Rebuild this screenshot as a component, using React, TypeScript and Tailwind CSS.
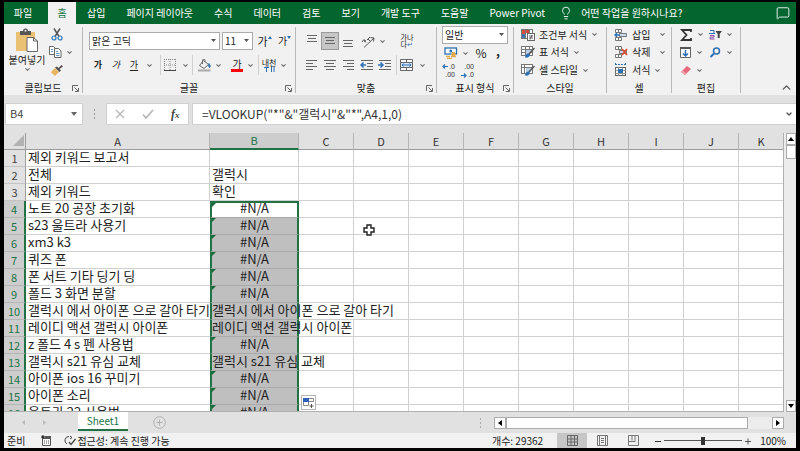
import type { ReactNode } from "react";
import { ChevronDown, ChevronUp, Lightbulb, MessageSquare } from "lucide-react";

const TABS = ["삽입", "페이지 레이아웃", "수식", "데이터", "검토", "보기", "개발 도구", "도움말", "Power Pivot"];
const COLUMNS = ["A", "B", "C", "D", "E", "F", "G", "H", "I", "J", "K"];

// "#N/A" marks the lookups that failed, spill marks text running over column C
const ROWS = [
    { a: "제외 키워드 보고서", b: "" },
    { a: "전체", b: "갤럭시" },
    { a: "제외 키워드", b: "확인" },
    { a: "노트 20 공장 초기화", b: "#N/A" },
    { a: "s23 울트라 사용기", b: "#N/A" },
    { a: "xm3 k3", b: "#N/A" },
    { a: "퀴즈 폰", b: "#N/A" },
    { a: "폰 서트 기타 딩기 딩", b: "#N/A" },
    { a: "폴드 3 화면 분할", b: "#N/A" },
    { a: "갤럭시 에서 아이폰 으로 갈아 타기", b: "갤럭시 에서 아이폰 으로 갈아 타기", spill: true },
    { a: "레이디 액션 갤럭시 아이폰", b: "레이디 액션 갤럭시 아이폰" },
    { a: "z 폴드 4 s 펜 사용법", b: "#N/A" },
    { a: "갤럭시 s21 유심 교체", b: "갤럭시 s21 유심 교체" },
    { a: "아이폰 ios 16 꾸미기", b: "#N/A" },
    { a: "아이폰 소리", b: "#N/A" },
    { a: "울트라 22 사용법", b: "#N/A" },
];

function Caret() {
    return <ChevronDown size={7} strokeWidth={4} className="shrink-0 text-[#777]" />;
}

function Divider() {
    return <span className="h-5 w-px bg-[#d0d0d0]" />;
}

function Tool({ label, className = "", children }: { label: string; className?: string; children: ReactNode }) {
    return (
        <button aria-label={label} className={`flex h-[18px] shrink-0 items-center justify-center ${className}`}>
            {children}
        </button>
    );
}

function Group({ title, width, launcher, children }: { title: string; width: string; launcher?: boolean; children: ReactNode }) {
    return (
        <section className={`flex shrink-0 ${width}`}>
            <div className="relative flex min-w-0 flex-1 flex-col">
                <div className="h-[53px] shrink-0">{children}</div>
                <h2 className="text-center leading-[17px]">{title}</h2>
                {launcher && (
                    <button aria-label={`${title} 설정`} className="absolute right-[3px] bottom-[3px]">
                        <svg width="7" height="7" viewBox="0 0 7 7" fill="none" stroke="#666">
                            <path d="M.5 6V.5H6M2.5 2.5l3.5 3.5M6.5 3v3.5H3" />
                        </svg>
                    </button>
                )}
            </div>
            <span className="mt-px mb-0.5 w-px bg-[#b9b9b9]" />
        </section>
    );
}

function Select({ label, value, className }: { label: string; value: string; className: string }) {
    return (
        <span className={`relative flex h-[18px] shrink-0 ${className}`}>
            <select aria-label={label} className="w-full appearance-none border border-[#ababab] bg-white pl-0.5 text-[10px] leading-4 text-[#222] outline-none">
                <option>{value}</option>
            </select>
            <svg width="5" height="3" viewBox="0 0 5 3" className="pointer-events-none absolute top-[7px] right-[4px]">
                <path d="M0 0h5L2.5 3z" fill="#555" />
            </svg>
        </span>
    );
}

// Horizontal strokes used by the alignment buttons: [x, y, width]
function Lines({ rows }: { rows: number[][] }) {
    return (
        <svg width="12" height="12" viewBox="0 0 12 12" fill="#666">
            {rows.map(([x, y, w]) => <rect key={y} x={x} y={y} width={w} height="1" />)}
        </svg>
    );
}

function Indent({ left }: { left?: boolean }) {
    return (
        <svg width="13" height="12" viewBox="0 0 13 12" fill="none" stroke="#666">
            <path d="M1 1.5h12M7 4.5h6M7 7.5h6M1 10.5h12" />
            <path d={left ? "M6 6H1M3.5 3.5L1 6l2.5 2.5" : "M0 6h5M2.5 3.5L5 6 2.5 8.5"} stroke="#2b6fb5" strokeWidth="1.5" />
        </svg>
    );
}

function PasteIcon() {
    return (
        <svg width="24" height="25" viewBox="0 0 24 25">
            <path d="M1 4h19v19H1z" fill="#eac073" />
            <path d="M5 3h3a2.5 2.5 0 0 1 5 0h3v4H5z" fill="#555" />
            <circle cx="10.5" cy="2.8" r="1" fill="#eee" />
            <path d="M12 9.5h6.5L22.5 13v10.5H12z" fill="#fff" stroke="#666" />
            <path d="M18.5 9.5V13h4" fill="none" stroke="#666" />
        </svg>
    );
}

function CutIcon() {
    return (
        <svg width="12" height="13" viewBox="0 0 12 13" fill="none">
            <path d="M3 .5l5 8M9 .5l-5 8" stroke="#555" strokeWidth="1.5" />
            <circle cx="3" cy="10" r="2" stroke="#3478b8" strokeWidth="1.2" />
            <circle cx="9" cy="10" r="2" stroke="#3478b8" strokeWidth="1.2" />
        </svg>
    );
}

function CopyIcon() {
    return (
        <svg width="13" height="12" viewBox="0 0 13 12" fill="#fff" stroke="#666">
            <path d="M.5.5h4l2 2v6h-6z" />
            <path d="M5.5 2.5h4L12 5v6.5H5.5z" />
            <path d="M2 3.5h2M2 5.5h2M7 5.5h2M7 7.5h3.5M7 9.5h3.5" stroke="#3c7cb8" strokeWidth=".8" />
        </svg>
    );
}

function BrushIcon() {
    return (
        <svg width="12" height="11" viewBox="0 0 12 11">
            <path d="M0 7l4-4 4 4-4 4c-1-1.5-2-1-4-4z" fill="#e8b562" />
            <path d="M4 2.5L8.5 7 10 5.5 8.5 4 12 1.5 10.5 0l-3 3L6 1.5z" fill="#505050" />
        </svg>
    );
}

function BucketIcon() {
    return (
        <svg width="13" height="13" viewBox="0 0 13 13" fill="none">
            <path d="M5.5 1.5l5 4L6 9.5l-4.500-3zM4.5 5V1.500a1.200 1.200 0 0 1 2.500 0V3" stroke="#666" />
            <path d="M11 4.5c1.500 2 1.500 3.500.5 4-1-.5-1-2-.5-4z" fill="#3478b8" stroke="#3478b8" />
            <rect y="10.5" width="12.5" height="2" fill="#aaa" />
        </svg>
    );
}

function MoneyIcon() {
    return (
        <svg width="14" height="12" viewBox="0 0 14 12">
            <rect x="1" y="1" width="11.5" height="6" fill="#fff" stroke="#2c70b0" strokeWidth="1.3" />
            <circle cx="6.8" cy="4" r="1.5" fill="#2c70b0" />
            <path d="M7 7.5h5M7 9.5h5M2 9.5h4M3 11.3h5" stroke="#e2aa4e" strokeWidth="1.3" />
            <path d="M9.5 5v4" stroke="#e2aa4e" strokeWidth="3" />
        </svg>
    );
}

function DecimalIcon({ add }: { add?: boolean }) {
    return (
        <span className="relative block h-4 w-[13px] text-right font-['Liberation_Sans',sans-serif] text-[7px] leading-[8px] text-[#333]">
            <span className="block">{add ? ".0" : ".00"}</span>
            <span className="block">{add ? ".00" : ".0"}</span>
            <svg width="6" height="5" viewBox="0 0 6 5" fill="none" stroke="#2b6fb5" strokeWidth="1.2" className={add ? "absolute top-px left-0" : "absolute bottom-px left-0"}>
                <path d={add ? "M6 2.5H1M3 .5l-2 2 2 2" : "M0 2.5h5M3 .5l2 2-2 2"} />
            </svg>
        </span>
    );
}

function StyleIcon({ kind }: { kind: "rule" | "table" | "cell" }) {
    return (
        <svg width="14" height="14" viewBox="0 0 14 14" fill="none">
            <rect x=".5" y="1.5" width="11" height="9" fill="#fff" stroke="#777" />
            {kind === "rule" ? (
                <>
                    <path d="M1 2h4v4H1z" fill="#d4503c" />
                    <path d="M1 6h3v4H1z" fill="#3b77b5" />
                    <path d="M5 2h3v3H5z" fill="#d4503c" />
                    <path d="M4.5 1.5v9M8.5 1.5v4" stroke="#777" />
                    <rect x="6.5" y="5.5" width="7" height="7" fill="#fff" stroke="#666" />
                    <path d="M8 8h4M8 10h4M11 7l-2 4.5" stroke="#444" strokeWidth=".8" />
                </>
            ) : (
                <>
                    <path d={kind === "table" ? "M.5 4.5h11M.5 7.5h11M4.5 1.5v9M8.5 1.5v9" : "M.5 4.5h11M3.5 1.5v9"} stroke="#777" />
                    <path d="M5 5h5v4H5z" fill="#b9cfe6" />
                    <path d="M13.5 3L8 9" stroke="#555" strokeWidth="1.5" />
                    <path d="M4 12.5c0-3 2-4.5 4-4l1 1.5c-.5 2-2.5 3-5 2.5z" fill="#2b6fb5" />
                </>
            )}
        </svg>
    );
}

function CellsIcon({ kind }: { kind: "insert" | "delete" | "format" }) {
    return (
        <svg width="14" height="14" viewBox="0 0 14 14" fill="none">
            {kind === "format" ? (
                <>
                    <path d="M1 1.5h11M1.5 0v3M11.5 0v3" stroke="#2b6fb5" strokeDasharray="2 1" />
                    <rect x="1.5" y="4.5" width="10" height="8" fill="#fff" stroke="#666" />
                    <path d="M1.5 7.5h10M4.5 4.5v8M8.5 4.5v8M1.5 10.5h10" stroke="#999" />
                    <path d="M4 6h5v4H4z" fill="#2b6fb5" />
                </>
            ) : (
                <>
                    <path d="M1.5 1.5h6v3h-6zM4.5 1.5v3M1.5 9.5h6v3h-6zM4.5 9.5v3" fill="#fff" stroke="#777" />
                    <path d="M5.5 5.5h7v3h-7z" fill="#c8daec" stroke="#777" />
                    {kind === "insert"
                        ? <path d="M6 7H1M3 5L1 7l2 2" stroke="#2b6fb5" strokeWidth="1.3" />
                        : <path d="M8 4l5 6M13 4l-5 6" stroke="#d9492c" strokeWidth="1.5" />}
                </>
            )}
        </svg>
    );
}

function Ribbon() {
    const line = "flex items-center gap-1 whitespace-nowrap";
    return (
        <div className="flex h-[71px] shrink-0 overflow-hidden bg-[#f1f1f1] pt-0.5 text-[#222]">
            <Group title="클립보드" width="w-[79px]" launcher>
                <div className="flex h-full gap-1 pl-[5px]">
                    <button className="flex w-9 flex-col items-center pt-0.5 leading-[13px] whitespace-nowrap">
                        <PasteIcon />
                        <span>붙여넣기</span>
                        <Caret />
                    </button>
                    <div className="grid grid-rows-3 items-center">
                        <button aria-label="잘라내기" className="pl-0.5"><CutIcon /></button>
                        <button aria-label="복사" className="flex items-center gap-1"><CopyIcon /><Caret /></button>
                        <button aria-label="서식 복사" className="pl-0.5"><BrushIcon /></button>
                    </div>
                </div>
            </Group>

            <Group title="글꼴" width="w-[213px]" launcher>
                <div className="flex flex-col gap-[5px] pt-1.5 pl-1.5">
                    <div className="flex gap-0.5">
                        <Select label="글꼴" value="맑은 고딕" className="w-[131px]" />
                        <Select label="글꼴 크기" value="11" className="w-[31px]" />
                        <Tool label="글꼴 크기 크게" className="w-[19px]">
                            <span className="text-[11px]">가</span>
                            <svg width="4" height="3" viewBox="0 0 4 3" className="mb-2"><path d="M0 3l2-3 2 3z" fill="#2b6fb5" /></svg>
                        </Tool>
                        <Tool label="글꼴 크기 작게" className="w-[17px]">
                            <span>가</span>
                            <svg width="4" height="3" viewBox="0 0 4 3" className="mb-2"><path d="M0 0h4L2 3z" fill="#2b6fb5" /></svg>
                        </Tool>
                    </div>
                    <div className="flex items-center">
                        <Tool label="굵게" className="w-[18px] text-[9px] font-bold">가</Tool>
                        <Tool label="기울임꼴" className="w-[18px] text-[9px] italic">가</Tool>
                        <Tool label="밑줄" className="w-[18px] text-[9px] underline underline-offset-2">가</Tool>
                        <Tool label="밑줄 종류" className="w-[13px]"><Caret /></Tool>
                        <span className="w-1" />
                        <Divider />
                        <Tool label="테두리" className="w-[31px] gap-1.5">
                            <svg width="12" height="12" viewBox="0 0 12 12" fill="none" stroke="#888">
                                <path d="M.5 0v11M6 0v11M11.5 0v11M0 .5h12M0 6h12" strokeDasharray="1 1" />
                                <path d="M0 11.5h12" stroke="#444" />
                            </svg>
                            <Caret />
                        </Tool>
                        <Divider />
                        <Tool label="채우기 색" className="w-[34px] gap-1"><BucketIcon /><Caret /></Tool>
                        <Tool label="글꼴 색" className="w-[31px] gap-1">
                            <span className="w-3 border-b-[3px] border-[#f00] leading-[10px]">가</span>
                            <Caret />
                        </Tool>
                        <Divider />
                        <Tool label="윗주" className="w-[31px] gap-1">
                            <span className="flex flex-col items-center text-[8px] leading-[9px]">
                                내천
                                <svg width="12" height="5" viewBox="0 0 12 5" fill="none" stroke="#2b6fb5"><path d="M1 .5h5M3.5 0v5M8.5 0v5M11 0v5" /></svg>
                            </span>
                            <Caret />
                        </Tool>
                    </div>
                </div>
            </Group>

            <Group title="맞춤" width="w-[141px]" launcher>
                <div className="flex flex-col gap-[5px] pt-1.5 pl-[7px]">
                    <div className="flex items-center">
                        <Tool label="위쪽 맞춤" className="w-[18px]"><Lines rows={[[1, 0, 10], [2, 3, 8], [1, 6, 10]]} /></Tool>
                        <Tool label="가운데 맞춤" className="w-[18px] border border-[#999] bg-[#c6c6c6]"><Lines rows={[[1, 2, 10], [2, 5, 8], [1, 8, 10]]} /></Tool>
                        <Tool label="아래쪽 맞춤" className="w-[18px]"><Lines rows={[[1, 5, 10], [2, 8, 8], [1, 11, 10]]} /></Tool>
                        <Tool label="방향" className="w-[32px] gap-1">
                            <svg width="14" height="13" viewBox="0 0 14 13" fill="none" stroke="#555">
                                <path d="M3 12.5L13 3M9.5 2.5L13 3l-.5 3.5" />
                                <path d="M1 7l2-2.5 2 3M3 6.5l2-1M6 5l3-3M7 4l2.5 2.5" />
                            </svg>
                            <Caret />
                        </Tool>
                        <span className="w-[10px]" />
                        <Tool label="자동 줄 바꿈" className="w-4">
                            <span className="text-left text-[7px] leading-[7px] whitespace-nowrap">가나<br />다<span className="text-[#2b6fb5]">↵</span></span>
                        </Tool>
                    </div>
                    <div className="flex items-center">
                        <Tool label="왼쪽 맞춤" className="w-[18px]"><Lines rows={[[0, 1, 11], [0, 4, 7], [0, 7, 11], [0, 10, 7]]} /></Tool>
                        <Tool label="가로 가운데" className="w-[18px]"><Lines rows={[[0, 1, 12], [2, 4, 8], [0, 7, 12], [2, 10, 8]]} /></Tool>
                        <Tool label="오른쪽 맞춤" className="w-[18px]"><Lines rows={[[1, 1, 11], [5, 4, 7], [1, 7, 11], [5, 10, 7]]} /></Tool>
                        <Tool label="내어쓰기" className="w-[18px]"><Indent left /></Tool>
                        <Tool label="들여쓰기" className="w-[18px]"><Indent /></Tool>
                        <span className="w-[3px]" />
                        <Divider />
                        <Tool label="병합하고 가운데 맞춤" className="w-[32px] gap-1.5">
                            <svg width="13" height="12" viewBox="0 0 13 12" fill="#fff" stroke="#666">
                                <path d="M.5.5h12v11H.5zM6.5.5v11" />
                                <path d="M.5 3.5h12v5H.5z" fill="#dce8f4" />
                                <path d="M2 6h9M3.5 4.5L2 6l1.5 1.5M9.5 4.5L11 6 9.5 7.5" fill="none" stroke="#2b6fb5" />
                            </svg>
                            <Caret />
                        </Tool>
                    </div>
                </div>
            </Group>

            <Group title="표시 형식" width="w-[77px]" launcher>
                <div className="flex h-full flex-col pl-[5px]">
                    <Select label="표시 형식" value="일반" className="w-[66px]" />
                    <div className="flex items-center">
                        <Tool label="회계 표시 형식" className="w-[28px] gap-1"><MoneyIcon /><Caret /></Tool>
                        <Tool label="백분율" className="w-[22px] text-[12px]">%</Tool>
                        <Tool label="쉼표 스타일" className="w-3 pb-1 text-[12px] font-bold">,</Tool>
                    </div>
                    <div className="flex items-center gap-1.5">
                        <Tool label="자릿수 늘림"><DecimalIcon add /></Tool>
                        <Tool label="자릿수 줄임"><DecimalIcon /></Tool>
                    </div>
                </div>
            </Group>

            <Group title="스타일" width="w-[93px]">
                <div className="grid h-full grid-rows-3 pl-[7px]">
                    <button className={line}><StyleIcon kind="rule" />조건부 서식<Caret /></button>
                    <button className={line}><StyleIcon kind="table" />표 서식<Caret /></button>
                    <button className={line}><StyleIcon kind="cell" />셀 스타일<Caret /></button>
                </div>
            </Group>

            <Group title="셀" width="w-[65px]">
                <div className="grid h-full grid-rows-3 pl-[7px]">
                    <button className={line}><CellsIcon kind="insert" /><span className="w-[23px] text-left">삽입</span><Caret /></button>
                    <button className={line}><CellsIcon kind="delete" /><span className="w-[23px] text-left">삭제</span><Caret /></button>
                    <button className={line}><CellsIcon kind="format" />서식<Caret /></button>
                </div>
            </Group>

            <Group title="편집" width="w-[69px]">
                <div className="grid h-full grid-cols-[30px_30px] grid-rows-3 pl-[7px]">
                    <button aria-label="자동 합계" className={line}>
                        <svg width="14" height="12" viewBox="0 0 14 12" fill="none" stroke="#333" strokeWidth="1.8">
                            <path d="M12 3V1H3l4.5 5L3 11h9V9" />
                        </svg>
                        <Caret />
                    </button>
                    <button aria-label="정렬 및 필터" className={line}>
                        <svg width="13" height="11" viewBox="0 0 13 11" fill="none">
                            <path d="M1 1.5h4V4M0 4.5h6" stroke="#2b6fb5" />
                            <path d="M1 6.5h4v1.700H1V10h4.500" stroke="#8b4fa8" />
                            <path d="M6.5 2H13l-2.300 3v4h-2V5z" fill="#444" />
                        </svg>
                        <Caret />
                    </button>
                    <button aria-label="채우기" className={line}>
                        <svg width="13" height="13" viewBox="0 0 13 13" fill="none">
                            <path d="M1.5 1.5h10v10h-10z" fill="#fff" stroke="#666" />
                            <path d="M1 2h11" stroke="#555" strokeWidth="2" />
                            <path d="M6.5 4v6M4 7.5l2.5 2.5L9 7.5" stroke="#2b6fb5" strokeWidth="1.5" />
                        </svg>
                        <Caret />
                    </button>
                    <button aria-label="찾기 및 선택" className={line}>
                        <svg width="13" height="11" viewBox="0 0 13 11" fill="none" stroke="#2b6fb5" strokeWidth="1.5">
                            <circle cx="7.5" cy="4" r="3" />
                            <path d="M5 6.5L1.5 10" strokeWidth="2" />
                        </svg>
                        <Caret />
                    </button>
                    <button aria-label="지우기" className={line}>
                        <svg width="13" height="11" viewBox="0 0 13 11">
                            <path d="M2 7L8 1l4 3-6 6z" fill="#e8697d" />
                            <path d="M2 7l4 3 1.5-1.5-4-3z" fill="#f3a4b0" />
                        </svg>
                        <Caret />
                    </button>
                </div>
            </Group>

            <div className="flex flex-1 items-end justify-end pr-[3px] pb-px">
                <button aria-label="리본 메뉴 축소"><ChevronUp size={13} strokeWidth={2.5} className="text-[#555]" /></button>
            </div>
        </div>
    );
}

function FormulaBar() {
    return (
        <div className="flex h-[38px] shrink-0 items-center bg-[#e1e1e1] pl-px text-[#444]">
            <div className="relative h-[22px] w-[78px] border border-[#d0d0d0] bg-white">
                <input aria-label="이름 상자" defaultValue="B4" className="h-full w-full bg-transparent pb-0.5 pl-1 text-[11px] outline-none" />
                <svg width="6" height="4" viewBox="0 0 6 4" className="absolute top-2 right-[5px]"><path d="M0 0h6L3 4z" fill="#666" /></svg>
            </div>
            <svg width="23" height="10" viewBox="0 0 23 10" fill="#999">
                <path d="M11 0h1v2h-1zM11 4h1v2h-1zM11 8h1v2h-1z" />
            </svg>
            <div className="flex h-[22px] w-[83px] items-center justify-around border border-[#d0d0d0] bg-white">
                <button aria-label="취소">
                    <svg width="10" height="10" viewBox="0 0 10 10" stroke="#b5b5b5" strokeWidth="1.3"><path d="M1 1l8 8M9 1L1 9" /></svg>
                </button>
                <button aria-label="입력">
                    <svg width="12" height="10" viewBox="0 0 12 10" fill="none" stroke="#b5b5b5" strokeWidth="1.6"><path d="M1 5.5L4 9l7-8" /></svg>
                </button>
                <button aria-label="함수 삽입" className="font-['Liberation_Serif',serif] text-[12px] font-bold italic">
                    f<span className="text-[9px]">x</span>
                </button>
            </div>
            <div className="ml-[3px] flex h-[22px] flex-1 items-center border border-r-0 border-[#d0d0d0] bg-white pr-[3px]">
                <input
                    aria-label="수식 입력줄"
                    defaultValue={'=VLOOKUP("*"&"갤럭시"&"*",A4,1,0)'}
                    className="h-full min-w-0 flex-1 pb-0.5 pl-[9px] text-[12px] text-[#333] outline-none"
                />
                <ChevronDown size={8} strokeWidth={4} className="text-[#555]" />
            </div>
        </div>
    );
}

function Sheet() {
    return (
        <div className="flex min-h-0 flex-1 bg-[#e1e1e1]">
            <div className="relative min-w-0 flex-1 overflow-hidden border-r border-b border-[#b0b0b0] bg-white">
                <table className="w-full table-fixed border-separate border-spacing-0 text-[13px] leading-[14px] text-[#222]">
                    <colgroup>
                        <col className="w-[22px]" />
                        <col className="w-[184px]" />
                        <col className="w-[89px]" />
                        {COLUMNS.slice(2, -1).map((c) => <col key={c} className="w-[55px]" />)}
                        <col />
                    </colgroup>
                    <thead>
                        <tr className="bg-[#e1e1e1] text-[11px] text-[#333]">
                            <th aria-label="모두 선택" className="h-[17px] border-r border-b border-[#9b9b9b] p-0">
                                <svg width="12" height="12" viewBox="0 0 12 12" className="ml-auto"><path d="M11 0v11H0z" fill="#b2b2b2" /></svg>
                            </th>
                            {COLUMNS.map((c) => (
                                <th
                                    key={c}
                                    className={`p-0 pb-px font-normal ${c === "K" ? "" : "border-r"} ${c === "B" ? "border-b-2 border-r-[#b5b5b5] border-b-[#217346] bg-[#cdcdcd] text-[#217346]" : "border-b border-r-[#b5b5b5] border-b-[#9b9b9b]"}`}
                                >
                                    {c}
                                </th>
                            ))}
                        </tr>
                    </thead>
                    <tbody>
                        {ROWS.map((row, i) => {
                            const selected = i >= 3;
                            const error = row.b === "#N/A";
                            return (
                                <tr key={i}>
                                    <th
                                        className={`h-[17px] border-b p-0 text-[11px] font-normal ${selected ? "border-r-2 border-r-[#217346] border-b-[#b5b5b5] bg-[#cdcdcd] text-[#217346]" : "border-r border-r-[#9b9b9b] border-b-[#c4c4c4] bg-[#e1e1e1] text-[#444]"}`}
                                    >
                                        {i + 1}
                                    </th>
                                    <td className={`border-b border-[#d0d0d0] p-0 pb-0.5 pl-0.5 whitespace-nowrap ${selected ? "" : "border-r"}`}>{row.a}</td>
                                    <td
                                        className={`relative p-0 whitespace-nowrap ${selected ? "border-x-2 border-b border-x-[#217346] border-b-[#a9a9a9]" : "border-r border-b border-[#d0d0d0] pl-0.5"} ${i === 3 ? "border-t-2 border-t-[#217346] bg-white pb-1 leading-[10px]" : "pb-0.5"} ${i > 3 ? "bg-[#bfbfbf]" : ""} ${error ? "text-center" : ""}`}
                                    >
                                        {error && (
                                            <svg width="4" height="4" viewBox="0 0 4 4" className="absolute top-0 left-0"><path d="M0 0h4L0 4z" fill="#1b6b38" /></svg>
                                        )}
                                        {row.b}
                                    </td>
                                    {COLUMNS.slice(2).map((c) => (
                                        <td key={c} className={`border-b border-[#d0d0d0] p-0 ${(row.spill && c === "C") || c === "K" ? "" : "border-r"}`} />
                                    ))}
                                </tr>
                            );
                        })}
                    </tbody>
                </table>

                {/* Mouse pointer */}
                <svg width="12" height="12" viewBox="0 0 12 12" className="absolute top-[91px] left-[359px]">
                    <path d="M4 1h4v3h3v4H8v3H4V8H1V4h3z" fill="#fff" stroke="#222" strokeWidth="1.4" />
                </svg>

                {/* Auto fill options */}
                <button aria-label="자동 채우기 옵션" className="absolute bottom-px left-[297px] border border-[#b5b5b5] bg-white">
                    <svg width="13" height="13" viewBox="0 0 13 13" fill="none">
                        <path d="M1.5 2.5h10v3h-10zM1.5 5.5h5v4h-5z" stroke="#888" />
                        <path d="M1 2h6v4H1z" fill="#2f62b8" />
                        <path d="M9.5 8v4M7.5 10h4" stroke="#555" />
                    </svg>
                </button>
            </div>

            {/* Vertical scroll bar */}
            <div className="flex w-3 flex-col bg-[#ececec] pl-0.5">
                <button aria-label="위로" className="flex h-3 items-center justify-center border border-[#ababab] bg-white">
                    <svg width="6" height="4" viewBox="0 0 6 4"><path d="M0 4l3-4 3 4z" /></svg>
                </button>
                <div className="h-[14px] border border-[#ababab] bg-white" />
                <button aria-label="아래로" className="mt-auto flex h-3 items-center justify-center border border-[#ababab] bg-white">
                    <svg width="6" height="4" viewBox="0 0 6 4"><path d="M0 0h6L3 4z" /></svg>
                </button>
            </div>
        </div>
    );
}

function SheetTabs() {
    return (
        <div className="flex h-[21px] shrink-0 bg-[#e1e1e1] pr-3">
            <div className="flex w-[74px] items-center gap-[18px] pl-[18px]">
                <button aria-label="이전 시트"><svg width="3" height="5" viewBox="0 0 3 5"><path d="M3 0v5L0 2.5z" fill="#b8b8b8" /></svg></button>
                <button aria-label="다음 시트"><svg width="3" height="5" viewBox="0 0 3 5"><path d="M0 0v5l3-2.5z" fill="#b8b8b8" /></svg></button>
            </div>
            <button className="h-[19px] w-[50px] border-b-2 border-[#217346] bg-white text-[#217346]">Sheet1</button>
            <button aria-label="새 시트" className="ml-[25px]">
                <svg width="13" height="13" viewBox="0 0 13 13" fill="none" stroke="#b0b0b0">
                    <circle cx="6.5" cy="6.5" r="5.8" />
                    <path d="M6.5 3.5v6M3.5 6.5h6" />
                </svg>
            </button>
            <div className="ml-auto flex w-[304px] items-center gap-3">
                <svg width="2" height="10" viewBox="0 0 2 10" fill="#aaa"><path d="M0 0h1v2H0zM0 4h1v2H0zM0 8h1v2H0z" /></svg>
                <div className="flex h-3 flex-1 bg-[#ececec]">
                    <button aria-label="왼쪽" className="flex w-3 items-center justify-center border border-[#ababab] bg-white">
                        <svg width="4" height="6" viewBox="0 0 4 6"><path d="M4 0v6L0 3z" /></svg>
                    </button>
                    <div className="w-5/6 border border-[#ababab] bg-white" />
                    <button aria-label="오른쪽" className="ml-auto flex w-3 items-center justify-center border border-[#ababab] bg-white">
                        <svg width="4" height="6" viewBox="0 0 4 6"><path d="M0 0v6l4-3z" /></svg>
                    </button>
                </div>
            </div>
        </div>
    );
}

function StatusBar() {
    return (
        <footer className="flex h-[15px] shrink-0 items-center bg-[#f1f1f1] pr-2.5 pl-[3px] whitespace-nowrap text-[#222]">
            <span>준비</span>
            <button aria-label="매크로 기록" className="ml-4">
                <svg width="11" height="11" viewBox="0 0 11 11">
                    <path d="M1.5 3.5h8v7h-8z" fill="#fff" stroke="#555" />
                    <path d="M4 1h6v3H4z" fill="#555" />
                    <circle cx="2" cy="2" r="1.8" fill="#333" />
                    <path d="M3 6h5M3 8h5" stroke="#555" strokeDasharray="1 1" />
                </svg>
            </button>
            <button className="ml-3 flex items-center gap-px">
                <svg width="12" height="11" viewBox="0 0 12 11" fill="none" stroke="#444">
                    <path d="M5 1.5A4 4 0 0 0 3 9M6 1l2 1.5L6 4" />
                    <path d="M5 7l2 2.5L11.5 4" strokeWidth="1.3" />
                </svg>
                접근성: 계속 진행 가능
            </button>
            <span className="ml-auto">개수: 29362</span>
            <button aria-label="기본" className="ml-[14px] flex h-full w-[30px] items-center justify-center bg-[#c6c6c6]">
                <svg width="11" height="11" viewBox="0 0 11 11" fill="none" stroke="#666"><path d="M.5.5h10v10H.5zM.5 4h10M.5 7h10M4 .5v10M7.5.5v10" /></svg>
            </button>
            <button aria-label="페이지 레이아웃 보기" className="flex w-[31px] justify-center">
                <svg width="11" height="11" viewBox="0 0 11 11" fill="none" stroke="#777"><path d="M.5.5h10v10H.5zM2.5 1v9M8.5 1v9M4 3.5h3M4 5.5h3M4 7.5h3" /></svg>
            </button>
            <button aria-label="페이지 나누기 미리 보기" className="flex w-[30px] justify-center">
                <svg width="11" height="11" viewBox="0 0 11 11" fill="none" stroke="#777"><path d="M.5.5h10v10H.5zM4 .5v5M7 .5v5M.5 6.5H7V5.5" /></svg>
            </button>
            <button aria-label="축소" className="ml-1.5">
                <svg width="8" height="8" viewBox="0 0 8 8" stroke="#333"><path d="M1 4.5h6" /></svg>
            </button>
            <input
                type="range"
                aria-label="확대/축소"
                min={10}
                max={190}
                defaultValue={100}
                className="mx-0.5 h-px w-[78px] appearance-none bg-[#555] [&::-webkit-slider-thumb]:h-2 [&::-webkit-slider-thumb]:w-1 [&::-webkit-slider-thumb]:appearance-none [&::-webkit-slider-thumb]:bg-[#333]"
            />
            <button aria-label="확대">
                <svg width="8" height="8" viewBox="0 0 8 8" stroke="#555"><path d="M1 4.5h6M4 1.5v6" /></svg>
            </button>
            <span className="ml-2">100%</span>
        </footer>
    );
}

export default function App() {
    return (
        <div className="flex h-screen w-full flex-col overflow-hidden border-x-4 border-t-2 border-b-[3px] border-black bg-[#e1e1e1] font-['Noto_Sans_CJK_KR',sans-serif] text-[10px] leading-[14px]">
            <nav className="flex h-[22px] shrink-0 items-stretch bg-[#04652f] whitespace-nowrap text-white">
                <button className="w-11 pr-1.5">파일</button>
                <button className="w-7 bg-[#f1f1f1] text-[#217346]">홈</button>
                <div className="ml-[11px] flex gap-[21px]">
                    {TABS.map((tab) => <button key={tab}>{tab}</button>)}
                </div>
                <button className="ml-[14px] flex items-center gap-2">
                    <Lightbulb size={14} strokeWidth={1.5} />
                    어떤 작업을 원하시나요?
                </button>
                <button aria-label="메모" className="mr-1.5 ml-auto"><MessageSquare size={14} strokeWidth={1.5} /></button>
            </nav>
            <Ribbon />
            <FormulaBar />
            <Sheet />
            <SheetTabs />
            <StatusBar />
        </div>
    );
}
